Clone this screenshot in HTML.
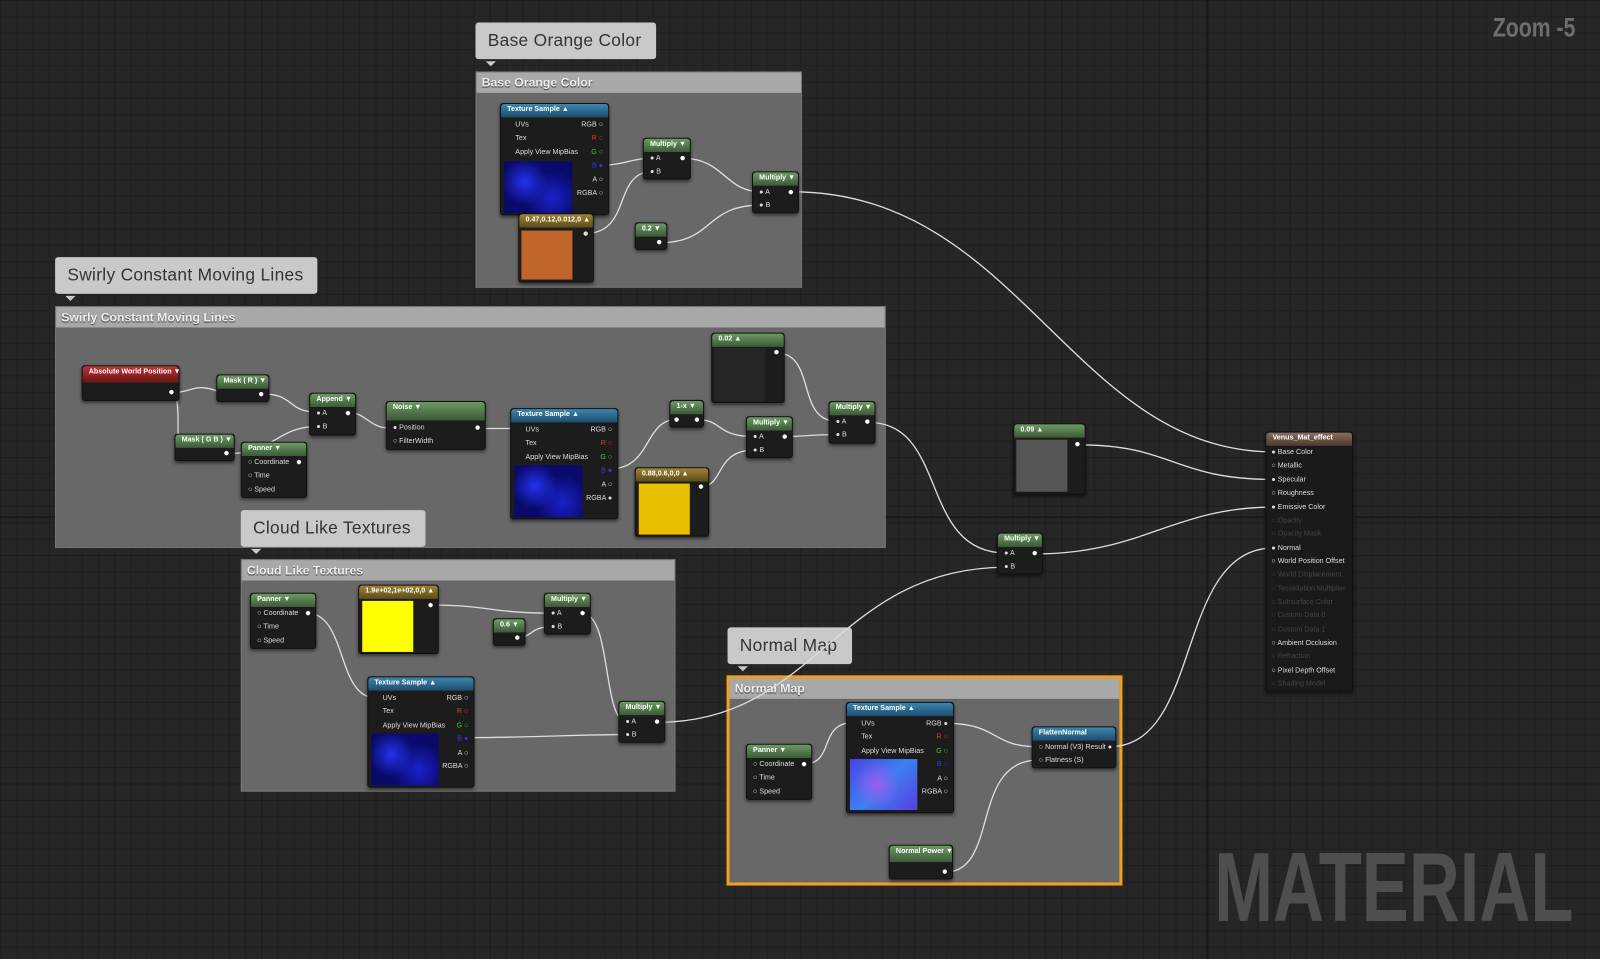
<!DOCTYPE html>
<html><head><meta charset="utf-8"><style>
*{margin:0;padding:0;box-sizing:border-box}
body{width:1600px;height:959px;overflow:hidden;background:#262626;font-family:"Liberation Sans",sans-serif}
#st{position:absolute;left:0;top:0;width:1568px;height:940px;overflow:hidden;transform:scale(1.0204,1.0202);transform-origin:0 0;
background-color:#262626;
background-image:linear-gradient(#1a1a1a,#1a1a1a),linear-gradient(#1a1a1a,#1a1a1a),linear-gradient(90deg,rgba(0,0,0,.18) 1px,transparent 1px),linear-gradient(rgba(0,0,0,.18) 1px,transparent 1px);
background-size:2px 940px,1568px 2px,16px 16px,16px 16px;background-position:1182px 0,0 506px,0 0,0 0;background-repeat:no-repeat,no-repeat,repeat,repeat}
.a{position:absolute}
.cm{position:absolute;background:#686868;border:1px solid #777}
.cm .h{height:20px;background:#a8a8a8;color:#eee;font-weight:bold;font-size:12px;padding:3px 5px;text-shadow:0 1px 1px #333}
.bb{position:absolute;background:#c9c9c9;border-radius:3px;color:#333;font-size:17px;padding:8px 14px 8px 12px;white-space:nowrap;letter-spacing:.3px}
.bb:after{content:"";position:absolute;left:10px;bottom:-7px;border:5px solid transparent;border-top:5px solid #c9c9c9;border-bottom:0}
.n{position:absolute;background:#1c1c1c;border:1px solid #111;border-radius:3px;box-shadow:0 2px 3px rgba(0,0,0,.5);color:#ddd;font-size:7px}
.n .h{height:13px;border-radius:3px 3px 0 0;padding:2px 6px;font-weight:bold;font-size:7px;color:#fff;white-space:nowrap}
.g{background:linear-gradient(#6d9a64,#3c5a37)}.b{background:linear-gradient(#3b86b0,#1d4d6d)}.y{background:linear-gradient(#9e8332,#5e4c1a)}.r{background:linear-gradient(#b33,#6a1515)}.br{background:linear-gradient(#8a6f5d,#4a3a30)}
.p{position:absolute;font-size:7px;color:#ddd;white-space:nowrap}
.sw{position:absolute}
.tx{background:radial-gradient(circle at 30% 40%,#2233ee,transparent 40%),radial-gradient(circle at 70% 70%,#1a22cc,transparent 45%),#0a0a6a}
</style></head><body><div id="st">
<div class="a" style="left:1463px;top:12px;font-size:26px;font-weight:bold;color:#6e6e6e;transform:scaleX(.8);transform-origin:0 0;white-space:nowrap">Zoom -5</div>
<div class="a" style="left:1190px;top:816px;font-size:96px;font-weight:bold;color:#4e4e4e;transform:scaleX(.72);transform-origin:0 0;white-space:nowrap">MATERIAL</div>

<div class="bb" style="left:466px;top:22px">Base Orange Color</div>
<div class="cm" style="left:466px;top:70px;width:320px;height:212px"><div class="h">Base Orange Color</div></div>
<div class="bb" style="left:54px;top:252px;padding-right:14px">Swirly Constant Moving Lines</div>
<div class="cm" style="left:54px;top:300px;width:814px;height:237px"><div class="h">Swirly Constant Moving Lines</div></div>
<div class="bb" style="left:236px;top:500px">Cloud Like Textures</div>
<div class="cm" style="left:236px;top:548px;width:426px;height:228px"><div class="h">Cloud Like Textures</div></div>
<div class="bb" style="left:713px;top:615px">Normal Map</div>
<div class="cm" style="left:712px;top:662px;width:388px;height:206px;border:3px solid #f0a020"><div class="h">Normal Map</div></div>

<svg class="a" style="left:0;top:0" width="1568" height="940" fill="none" stroke="#ddd" stroke-width="1.3">
<path d="M776 188C1000 188 1050 443 1249 443"/><path d="M1057 436C1150 436 1150 470 1249 470"/>
<path d="M1014 543C1120 543 1150 497 1249 497"/><path d="M1087 732C1180 732 1150 537 1249 537"/>
<path d="M851 414C930 414 900 542 986 542"/><path d="M645 708C800 708 820 556 986 556"/>
<path d="M590 162C610 162 620 155 640 155"/><path d="M573 229C620 229 600 168 640 168"/><path d="M668 155C710 155 710 188 746 188"/><path d="M646 238C700 238 690 201 746 201"/>
<path d="M168 385C180 385 170 445 178 445"/><path d="M168 385C190 385 190 373 220 386"/><path d="M256 386C290 386 280 404 312 404"/><path d="M220 445C270 445 270 418 312 418"/><path d="M340 404C360 404 360 420 385 420"/><path d="M468 420L508 420"/><path d="M596 460C640 460 630 411 664 411"/><path d="M681 411C710 411 700 428 740 428"/><path d="M687 477C710 477 700 441 740 441"/><path d="M761 346C800 346 780 413 820 413"/><path d="M768 428C790 428 790 426 820 426"/>
<path d="M301 601C340 601 330 684 368 684"/><path d="M421 593C480 593 480 601 541 601"/><path d="M506 626C520 626 520 614 541 614"/><path d="M570 601C600 601 590 707 614 707"/><path d="M456 723C530 723 560 720 614 720"/>
<path d="M787 749C820 749 800 708 838 708"/><path d="M926 709C980 709 970 732 1018 732"/><path d="M926 855C980 855 950 745 1018 745"/>
</svg>

<!-- Base Orange -->
<div class="n" style="left:490px;top:101px;width:107px;height:110px"><div class="h b">Texture Sample ▲</div>
<div class="p" style="left:14px;top:17px">UVs</div><div class="p" style="left:14px;top:30px">Tex</div><div class="p" style="left:14px;top:44px">Apply View MipBias</div>
<div class="p" style="right:5px;top:17px">RGB ○</div><div class="p" style="right:5px;top:30px;color:#e33">R ○</div><div class="p" style="right:5px;top:44px;color:#3c3">G ○</div><div class="p" style="right:5px;top:57px;color:#33f">B ●</div><div class="p" style="right:5px;top:71px">A ○</div><div class="p" style="right:5px;top:84px">RGBA ○</div>
<div class="sw tx" style="left:3px;top:56px;width:67px;height:51px"></div></div>
<div class="n" style="left:508px;top:209px;width:74px;height:68px"><div class="h y">0.47,0.12,0.012,0 ▲</div><div class="sw" style="left:2px;top:16px;width:50px;height:48px;background:#c0662a"></div><div class="p" style="right:4px;top:14px;font-size:10px">●</div></div>
<div class="n" style="left:630px;top:135px;width:47px;height:41px"><div class="h g">Multiply ▼</div><div class="p" style="left:6px;top:16px">● A</div><div class="p" style="left:6px;top:29px">● B</div><div class="p" style="right:4px;top:14px;font-size:10px;color:#fff">●</div></div>
<div class="n" style="left:737px;top:168px;width:46px;height:41px"><div class="h g">Multiply ▼</div><div class="p" style="left:6px;top:16px">● A</div><div class="p" style="left:6px;top:29px">● B</div><div class="p" style="right:4px;top:14px;font-size:10px;color:#fff">●</div></div>
<div class="n" style="left:622px;top:218px;width:32px;height:27px"><div class="h g">0.2 ▼</div><div class="p" style="right:4px;top:13px;font-size:10px;color:#fff">●</div></div>

<!-- Swirly -->
<div class="n" style="left:80px;top:358px;width:96px;height:35px"><div class="h r" style="height:16px">Absolute World Position ▼</div><div class="p" style="right:4px;top:20px;font-size:10px;color:#fff">●</div></div>
<div class="n" style="left:212px;top:367px;width:52px;height:27px"><div class="h g">Mask ( R ) ▼</div><div class="p" style="right:4px;top:13px;font-size:10px;color:#fff">●</div></div>
<div class="n" style="left:171px;top:425px;width:59px;height:27px"><div class="h g">Mask ( G B ) ▼</div><div class="p" style="right:4px;top:13px;font-size:10px;color:#fff">●</div></div>
<div class="n" style="left:303px;top:385px;width:46px;height:42px"><div class="h g">Append ▼</div><div class="p" style="left:6px;top:16px">● A</div><div class="p" style="left:6px;top:29px">● B</div><div class="p" style="right:4px;top:14px;font-size:10px;color:#fff">●</div></div>
<div class="n" style="left:236px;top:433px;width:65px;height:55px"><div class="h g">Panner ▼</div><div class="p" style="left:6px;top:16px">○ Coordinate</div><div class="p" style="left:6px;top:29px">○ Time</div><div class="p" style="left:6px;top:43px">○ Speed</div><div class="p" style="right:4px;top:14px;font-size:10px;color:#fff">●</div></div>
<div class="n" style="left:378px;top:393px;width:98px;height:48px"><div class="h g" style="height:18px">Noise ▼</div><div class="p" style="left:6px;top:22px">● Position</div><div class="p" style="left:6px;top:35px">○ FilterWidth</div><div class="p" style="right:4px;top:20px;font-size:10px;color:#fff">●</div></div>
<div class="n" style="left:500px;top:400px;width:106px;height:109px"><div class="h b">Texture Sample ▲</div>
<div class="p" style="left:14px;top:17px">UVs</div><div class="p" style="left:14px;top:30px">Tex</div><div class="p" style="left:14px;top:44px">Apply View MipBias</div>
<div class="p" style="right:5px;top:17px">RGB ○</div><div class="p" style="right:5px;top:30px;color:#e33">R ○</div><div class="p" style="right:5px;top:44px;color:#3c3">G ○</div><div class="p" style="right:5px;top:57px;color:#33f">B ●</div><div class="p" style="right:5px;top:71px">A ○</div><div class="p" style="right:5px;top:84px">RGBA ●</div>
<div class="sw tx" style="left:3px;top:55px;width:67px;height:51px"></div></div>
<div class="n" style="left:697px;top:326px;width:72px;height:69px"><div class="h g">0.02 ▲</div><div class="sw" style="left:2px;top:14px;width:50px;height:52px;background:#262626"></div><div class="p" style="right:4px;top:13px;font-size:10px;color:#fff">●</div></div>
<div class="n" style="left:656px;top:392px;width:34px;height:27px"><div class="h g">1-x ▼</div><div class="p" style="left:3px;top:13px;font-size:10px;color:#fff">●</div><div class="p" style="right:3px;top:13px;font-size:10px;color:#fff">●</div></div>
<div class="n" style="left:731px;top:408px;width:46px;height:41px"><div class="h g">Multiply ▼</div><div class="p" style="left:6px;top:16px">● A</div><div class="p" style="left:6px;top:29px">● B</div><div class="p" style="right:4px;top:14px;font-size:10px;color:#fff">●</div></div>
<div class="n" style="left:622px;top:458px;width:73px;height:68px"><div class="h y">0.88,0.6,0,0 ▲</div><div class="sw" style="left:3px;top:15px;width:50px;height:50px;background:#e8c000"></div><div class="p" style="right:4px;top:13px;font-size:10px;color:#fff">●</div></div>
<div class="n" style="left:812px;top:393px;width:46px;height:42px"><div class="h g">Multiply ▼</div><div class="p" style="left:6px;top:16px">● A</div><div class="p" style="left:6px;top:29px">● B</div><div class="p" style="right:4px;top:14px;font-size:10px;color:#fff">●</div></div>

<!-- Cloud -->
<div class="n" style="left:245px;top:581px;width:65px;height:55px"><div class="h g">Panner ▼</div><div class="p" style="left:6px;top:16px">○ Coordinate</div><div class="p" style="left:6px;top:29px">○ Time</div><div class="p" style="left:6px;top:43px">○ Speed</div><div class="p" style="right:4px;top:14px;font-size:10px;color:#fff">●</div></div>
<div class="n" style="left:351px;top:573px;width:79px;height:68px"><div class="h y">1.9e+02,1e+02,0,0 ▲</div><div class="sw" style="left:3px;top:15px;width:50px;height:50px;background:#ffff00"></div><div class="p" style="right:4px;top:14px;font-size:10px;color:#fff">●</div></div>
<div class="n" style="left:483px;top:606px;width:32px;height:27px"><div class="h g">0.6 ▼</div><div class="p" style="right:4px;top:13px;font-size:10px;color:#fff">●</div></div>
<div class="n" style="left:533px;top:581px;width:46px;height:41px"><div class="h g">Multiply ▼</div><div class="p" style="left:6px;top:16px">● A</div><div class="p" style="left:6px;top:29px">● B</div><div class="p" style="right:4px;top:14px;font-size:10px;color:#fff">●</div></div>
<div class="n" style="left:360px;top:663px;width:105px;height:109px"><div class="h b">Texture Sample ▲</div>
<div class="p" style="left:14px;top:17px">UVs</div><div class="p" style="left:14px;top:30px">Tex</div><div class="p" style="left:14px;top:44px">Apply View MipBias</div>
<div class="p" style="right:5px;top:17px">RGB ○</div><div class="p" style="right:5px;top:30px;color:#e33">R ○</div><div class="p" style="right:5px;top:44px;color:#3c3">G ○</div><div class="p" style="right:5px;top:57px;color:#33f">B ●</div><div class="p" style="right:5px;top:71px">A ○</div><div class="p" style="right:5px;top:84px">RGBA ○</div>
<div class="sw tx" style="left:3px;top:55px;width:66px;height:51px"></div></div>
<div class="n" style="left:606px;top:687px;width:46px;height:41px"><div class="h g">Multiply ▼</div><div class="p" style="left:6px;top:16px">● A</div><div class="p" style="left:6px;top:29px">● B</div><div class="p" style="right:4px;top:14px;font-size:10px;color:#fff">●</div></div>

<!-- Normal map -->
<div class="n" style="left:731px;top:729px;width:65px;height:55px"><div class="h g">Panner ▼</div><div class="p" style="left:6px;top:16px">○ Coordinate</div><div class="p" style="left:6px;top:29px">○ Time</div><div class="p" style="left:6px;top:43px">○ Speed</div><div class="p" style="right:4px;top:14px;font-size:10px;color:#fff">●</div></div>
<div class="n" style="left:829px;top:688px;width:106px;height:109px"><div class="h b">Texture Sample ▲</div>
<div class="p" style="left:14px;top:17px">UVs</div><div class="p" style="left:14px;top:30px">Tex</div><div class="p" style="left:14px;top:44px">Apply View MipBias</div>
<div class="p" style="right:5px;top:17px">RGB ●</div><div class="p" style="right:5px;top:30px;color:#e33">R ○</div><div class="p" style="right:5px;top:44px;color:#3c3">G ○</div><div class="p" style="right:5px;top:57px;color:#33f">B ○</div><div class="p" style="right:5px;top:71px">A ○</div><div class="p" style="right:5px;top:84px">RGBA ○</div>
<div class="sw" style="left:3px;top:55px;width:66px;height:50px;background:radial-gradient(circle at 40% 50%,#9a5cf0,transparent 50%),linear-gradient(135deg,#4a44e6,#3a80f0 50%,#5a3ee0)"></div></div>
<div class="n" style="left:1011px;top:712px;width:83px;height:41px"><div class="h b">FlattenNormal</div><div class="p" style="left:6px;top:16px">○ Normal (V3) Result ●</div><div class="p" style="left:6px;top:29px">○ Flatness (S)</div></div>
<div class="n" style="left:871px;top:828px;width:63px;height:34px"><div class="h g" style="height:16px">Normal Power ▼</div><div class="p" style="right:4px;top:20px;font-size:10px;color:#fff">●</div></div>

<div class="n" style="left:993px;top:415px;width:71px;height:70px"><div class="h g">0.09 ▲</div><div class="sw" style="left:2px;top:15px;width:50px;height:51px;background:#555"></div><div class="p" style="right:4px;top:14px;font-size:10px;color:#fff">●</div></div>
<div class="n" style="left:977px;top:522px;width:45px;height:41px"><div class="h g">Multiply ▼</div><div class="p" style="left:6px;top:16px">● A</div><div class="p" style="left:6px;top:29px">● B</div><div class="p" style="right:4px;top:14px;font-size:10px;color:#fff">●</div></div>

<div class="n" style="left:1240px;top:423px;width:86px;height:255px;background:#1a1a1a"><div class="h br">Venus_Mat_effect</div>
<div class="p" style="left:5px;top:16px">● Base Color</div><div class="p" style="left:5px;top:29px">○ Metallic</div><div class="p" style="left:5px;top:43px">● Specular</div><div class="p" style="left:5px;top:56px">○ Roughness</div><div class="p" style="left:5px;top:70px">● Emissive Color</div>
<div class="p" style="left:5px;top:83px;color:#444">○ Opacity</div><div class="p" style="left:5px;top:96px;color:#444">○ Opacity Mask</div><div class="p" style="left:5px;top:110px">● Normal</div><div class="p" style="left:5px;top:123px">○ World Position Offset</div>
<div class="p" style="left:5px;top:136px;color:#444">○ World Displacement</div><div class="p" style="left:5px;top:150px;color:#444">○ Tessellation Multiplier</div><div class="p" style="left:5px;top:163px;color:#444">○ Subsurface Color</div><div class="p" style="left:5px;top:176px;color:#444">○ Custom Data 0</div><div class="p" style="left:5px;top:190px;color:#444">○ Custom Data 1</div>
<div class="p" style="left:5px;top:203px">○ Ambient Occlusion</div><div class="p" style="left:5px;top:216px;color:#444">○ Refraction</div><div class="p" style="left:5px;top:230px">○ Pixel Depth Offset</div><div class="p" style="left:5px;top:243px;color:#444">○ Shading Model</div></div>
</div></body></html>
